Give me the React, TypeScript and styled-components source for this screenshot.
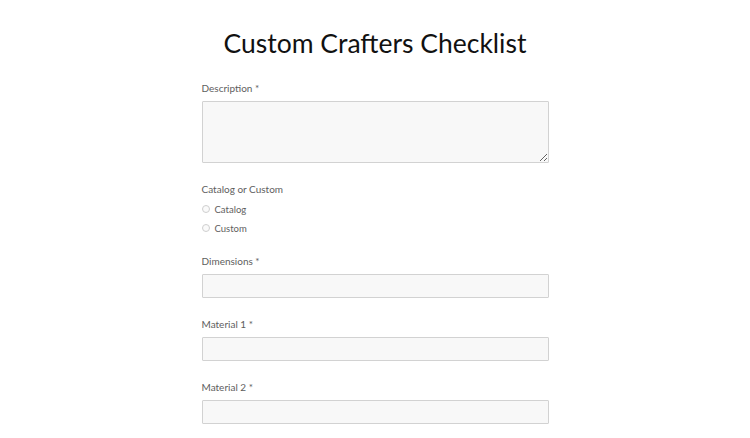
import styled, { createGlobalStyle } from "styled-components";

const GlobalStyle = createGlobalStyle`
  body {
    margin: 0;
    background: #ffffff;
    font-family: Lato, "Open Sans", Arial, sans-serif;
  }
`;

const Page = styled.main`
  display: flex;
  flex-direction: column;
  align-items: center;
  padding-top: 26px;
`;

const Title = styled.h1`
  margin: 0 0 21px;
  font-size: 26.5px;
  line-height: 34px;
  font-weight: 400;
  color: #111111;
`;

const Form = styled.form`
  width: 347px;
  display: flex;
  flex-direction: column;
  gap: 19px;
`;

const Field = styled.div`
  display: flex;
  flex-direction: column;
  gap: 6px;
`;

const Label = styled.label`
  font-size: 10px;
  line-height: 14px;
  color: #5e5e5e;
`;

const baseInput = `
  box-sizing: border-box;
  width: 100%;
  margin: 0;
  border: 1px solid #d2d2d2;
  border-radius: 1px;
  background: #f8f8f8;
  font-family: inherit;
  font-size: 12px;
  color: #333;
  outline: none;
`;

const TextArea = styled.textarea`
  ${baseInput}
  height: 62px;
  padding: 6px 8px;
  resize: vertical;
  display: block;
`;

const TextInput = styled.input`
  ${baseInput}
  height: 24px;
  padding: 0 8px;
  display: block;
`;

const RadioList = styled.div`
  display: flex;
  flex-direction: column;
  gap: 5px;
`;

const RadioRow = styled.label`
  display: flex;
  align-items: center;
  gap: 5px;
  height: 14px;
  font-size: 9.5px;
  color: #5e5e5e;
`;

const Radio = styled.input.attrs({ type: "radio" })`
  appearance: none;
  margin: 0;
  width: 8px;
  height: 8px;
  border: 1px solid #cfcfcf;
  border-radius: 50%;
  background: #fafafa;
  box-sizing: border-box;
`;

const textFields = ["Dimensions *", "Material 1 *", "Material 2 *"];

export default function App() {
  return (
    <>
      <GlobalStyle />
      <Page>
        <Title>Custom Crafters Checklist</Title>
        <Form>
          <Field>
            <Label>Description *</Label>
            <TextArea />
          </Field>
          <Field>
            <Label>Catalog or Custom</Label>
            <RadioList>
              <RadioRow>
                <Radio name="kind" />
                Catalog
              </RadioRow>
              <RadioRow>
                <Radio name="kind" />
                Custom
              </RadioRow>
            </RadioList>
          </Field>
          {textFields.map((name) => (
            <Field key={name}>
              <Label>{name}</Label>
              <TextInput />
            </Field>
          ))}
        </Form>
      </Page>
    </>
  );
}
